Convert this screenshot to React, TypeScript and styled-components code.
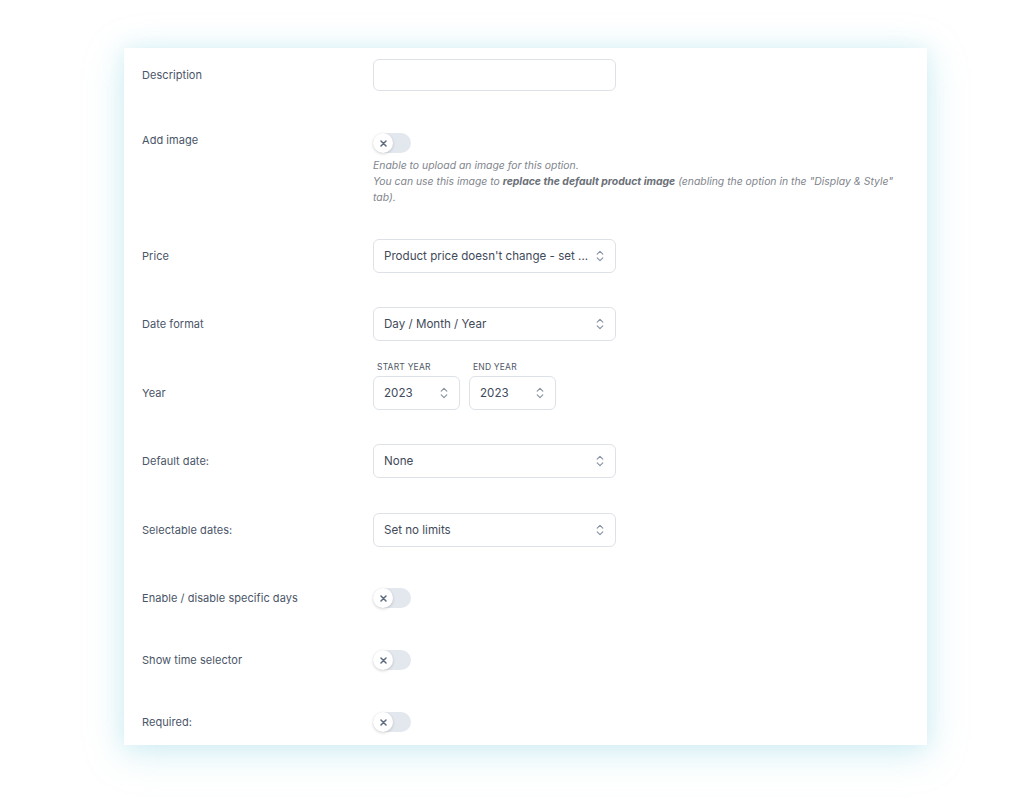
import React from "react";
import styled, { createGlobalStyle } from "styled-components";

const Global = createGlobalStyle`
  html, body { margin: 0; padding: 0; background: #ffffff; }
  body { font-family: Inter, "Noto Sans", sans-serif; -webkit-font-smoothing: antialiased; }
  * { box-sizing: border-box; }
`;

const Page = styled.div`
  padding: 48px 97px 60px 124px;
`;

const Card = styled.div`
  background: #ffffff;
  width: 803px;
  height: 697px;
  padding: 11px 18px 0 18px;
  box-shadow: 0 8px 36px rgba(150, 215, 228, 0.38), 0 0 18px rgba(170, 225, 235, 0.3);
  display: flex;
  flex-direction: column;
`;

const Row = styled.div<{ $mt: number; $align?: string }>`
  display: grid;
  grid-template-columns: 231px 1fr;
  align-items: ${(p) => p.$align || "center"};
  margin-top: ${(p) => p.$mt}px;
`;

const Label = styled.div<{ $pb?: number }>`
  font-size: 11px;
  color: #4a5568;
  padding-bottom: ${(p) => p.$pb || 0}px;
  letter-spacing: 0.05px;
`;

const Input = styled.div`
  width: 243px;
  height: 32px;
  border: 1px solid #dde2e8;
  border-radius: 6px;
  background: #fff;
`;

const SelectBox = styled.div<{ $w: number }>`
  width: ${(p) => p.$w}px;
  height: 34px;
  border: 1px solid #dde2e8;
  border-radius: 6px;
  background: #fff;
  display: flex;
  align-items: center;
  justify-content: space-between;
  gap: 4px;
  padding: 0 11px 0 10px;
  font-size: 11.6px;
  color: #3f4a5a;
`;

const SelectText = styled.span`
  white-space: nowrap;
`;

const Chevrons = () => (
  <svg width="8" height="12" viewBox="0 0 8 12" fill="none" stroke="#8a94a3" strokeWidth="1.2" strokeLinecap="round" strokeLinejoin="round" style={{ flexShrink: 0 }}>
    <path d="M1.2 4.2 L4 1.4 L6.8 4.2" />
    <path d="M1.2 7.8 L4 10.6 L6.8 7.8" />
  </svg>
);

const Select = ({ w, text }: { w: number; text: string }) => (
  <SelectBox $w={w}>
    <SelectText>{text}</SelectText>
    <Chevrons />
  </SelectBox>
);

const Track = styled.div`
  width: 38px;
  height: 20px;
  border-radius: 10px;
  background: #e3e8ef;
  position: relative;
`;

const Knob = styled.div`
  position: absolute;
  left: 0;
  top: 0;
  width: 20px;
  height: 20px;
  border-radius: 50%;
  background: #fff;
  box-shadow: 0 1px 3px rgba(0, 0, 0, 0.18);
  display: flex;
  align-items: center;
  justify-content: center;
`;

const Toggle = () => (
  <Track>
    <Knob>
      <svg width="7" height="7" viewBox="0 0 7 7" stroke="#5c6b80" strokeWidth="1.5" strokeLinecap="round">
        <path d="M1 1 L6 6 M6 1 L1 6" />
      </svg>
    </Knob>
  </Track>
);

const Stack = styled.div`
  display: flex;
  flex-direction: column;
`;

const Help = styled.div`
  margin-top: 5px;
  font-size: 10.4px;
  font-style: italic;
  line-height: 16px;
  color: #7f858d;
  max-width: 530px;
`;

const Strong = styled.span`
  font-weight: 700;
  color: #6b7078;
`;

const YearGroup = styled.div`
  display: flex;
  gap: 9px;
`;

const SubLabel = styled.div`
  font-size: 8.5px;
  color: #4f5866;
  text-transform: uppercase;
  letter-spacing: 0.2px;
  margin: 0 0 4px 4px;
`;

const Control = styled.div``;

export default function App() {
  return (
    <>
      <Global />
      <Page>
        <Card>
          <Row $mt={0}>
            <Label>Description</Label>
            <Input />
          </Row>
          <Row $mt={42} $align="start">
            <Label>Add image</Label>
            <Stack>
              <Toggle />
              <Help>
                Enable to upload an image for this option.
                <br />
                You can use this image to <Strong>replace the default product image</Strong> (enabling the option in the "Display &amp; Style" tab).
              </Help>
            </Stack>
          </Row>
          <Row $mt={33}>
            <Label>Price</Label>
            <Select w={243} text="Product price doesn't change - set ..." />
          </Row>
          <Row $mt={34}>
            <Label>Date format</Label>
            <Select w={243} text="Day / Month / Year" />
          </Row>
          <Row $mt={21} $align="end">
            <Label $pb={10}>Year</Label>
            <YearGroup>
              <Control>
                <SubLabel>Start year</SubLabel>
                <Select w={87} text="2023" />
              </Control>
              <Control>
                <SubLabel>End year</SubLabel>
                <Select w={87} text="2023" />
              </Control>
            </YearGroup>
          </Row>
          <Row $mt={34}>
            <Label>Default date:</Label>
            <Select w={243} text="None" />
          </Row>
          <Row $mt={35}>
            <Label>Selectable dates:</Label>
            <Select w={243} text="Set no limits" />
          </Row>
          <Row $mt={41}>
            <Label>Enable / disable specific days</Label>
            <Toggle />
          </Row>
          <Row $mt={42}>
            <Label>Show time selector</Label>
            <Toggle />
          </Row>
          <Row $mt={42}>
            <Label>Required:</Label>
            <Toggle />
          </Row>
        </Card>
      </Page>
    </>
  );
}
